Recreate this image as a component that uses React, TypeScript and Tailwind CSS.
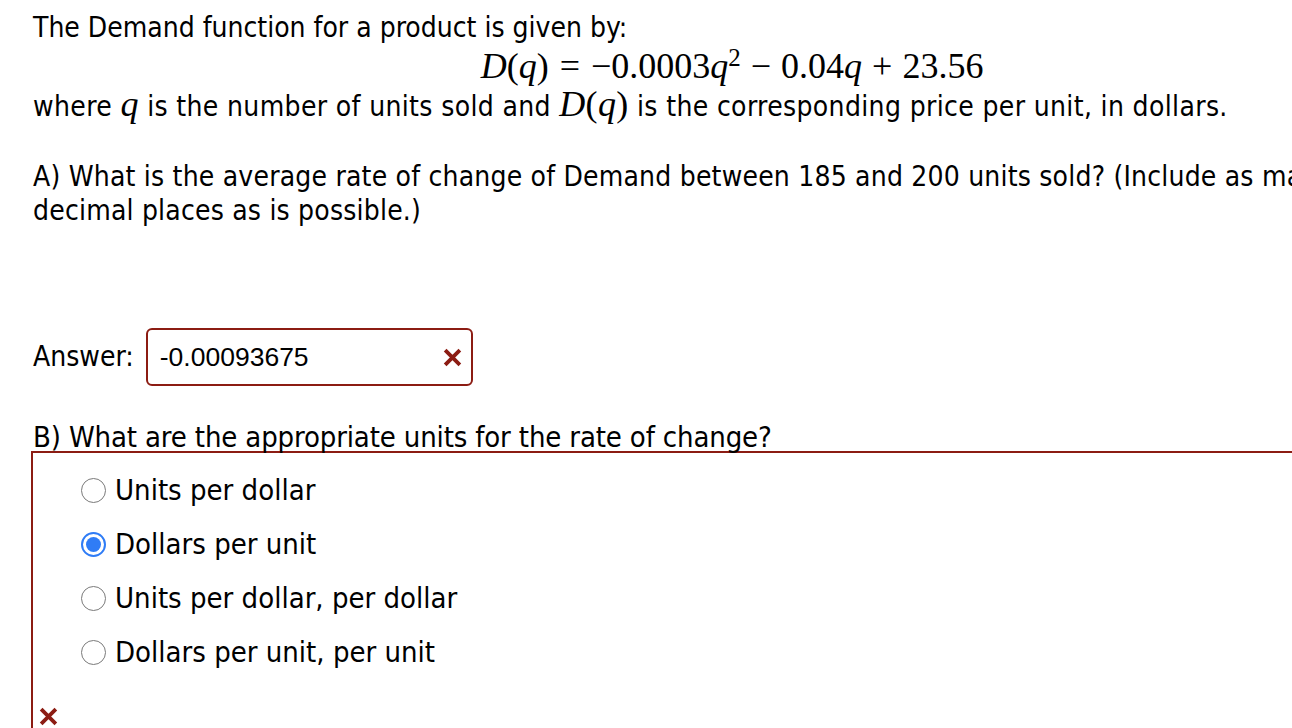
import { ReactNode } from 'react'

const red = 'border-[#8c1c13]'

const XMark = ({ className = '' }: { className?: string }) => (
  <svg viewBox="0 0 20 20" className={className}>
    <path d="M3 3 L17 17 M17 3 L3 17" stroke="#8c1c13" strokeWidth="3.6" strokeLinecap="butt" />
  </svg>
)

const M = ({ children }: { children: ReactNode }) => (
  <span className="font-['Liberation_Serif',serif] text-[36px] italic">{children}</span>
)

const P = ({ children }: { children: ReactNode }) => (
  <span className="font-['Liberation_Serif',serif] text-[36px]">{children}</span>
)

const Radio = ({ checked, label }: { checked?: boolean; label: string }) => (
  <label className="flex h-[54px] items-center gap-[9px]">
    {checked ? (
      <span className="flex h-[25px] w-[25px] items-center justify-center rounded-full border-[2px] border-[#2f7cf6] bg-white">
        <span className="h-[15px] w-[15px] rounded-full bg-[#2f7cf6]" />
      </span>
    ) : (
      <span className="h-[25px] w-[25px] rounded-full border-[1.5px] border-[#7a7a7a] bg-white" />
    )}
    <span>{label}</span>
  </label>
)

export default function App() {
  return (
    <div className="h-[728px] w-[1292px] overflow-hidden bg-white font-['DejaVu_Sans_Condensed','DejaVu_Sans',sans-serif] text-[28px] leading-[34px] text-black">
      <div className="w-[1431px] pl-[33px] pt-[11px]">
        <p>The Demand function for a product is given by:</p>
        <div className="flex h-[42px] items-center justify-center font-['Liberation_Serif',serif] text-[36px] leading-[42px]">
          <span>
            <i>D</i>(<i>q</i>)<span className="mx-[11px]">=</span>−0.0003<i>q</i>
            <sup className="text-[25px]">2</sup>
            <span className="mx-[10px]">−</span>0.04<i>q</i>
            <span className="mx-[10px]">+</span>23.56
          </span>
        </div>
        <p className="tracking-[0.35px]">
          where <M>q</M> is the number of units sold and <M>D</M>
          <P>(</P>
          <M>q</M>
          <P>)</P> is the corresponding price per unit, in dollars.
        </p>

        <p className="mt-[36px] tracking-[0.2px]">
          A) What is the average rate of change of Demand between 185 and 200 units sold? (Include as many
          <br />
          decimal places as is possible.)
        </p>

        <div className="mt-[100px] flex items-center gap-[12px]">
          <span>Answer:</span>
          <div className={`flex h-[58px] w-[327px] items-center justify-between rounded-[6px] border-[2px] ${red} pl-[12px] pr-[8px] font-['Liberation_Sans',sans-serif] text-[26.5px]`}>
            <span>-0.00093675</span>
            <XMark className="h-[21px] w-[21px]" />
          </div>
        </div>
      </div>

      <div className="mt-[36px] pl-[33px] text-[29px]">
        <p className="relative z-10 leading-[30px] tracking-[-0.15px]">B) What are the appropriate units for the rate of change?</p>
        <div className={`-mt-[1px] ml-[-2px] h-[400px] border-t-[2px] border-l-[2px] ${red} pl-[48px] pt-[10px]`}>
          <Radio label="Units per dollar" />
          <Radio checked label="Dollars per unit" />
          <Radio label="Units per dollar, per dollar" />
          <Radio label="Dollars per unit, per unit" />
          <XMark className="mt-[27px] -ml-[43px] h-[21px] w-[21px]" />
        </div>
      </div>
    </div>
  )
}
